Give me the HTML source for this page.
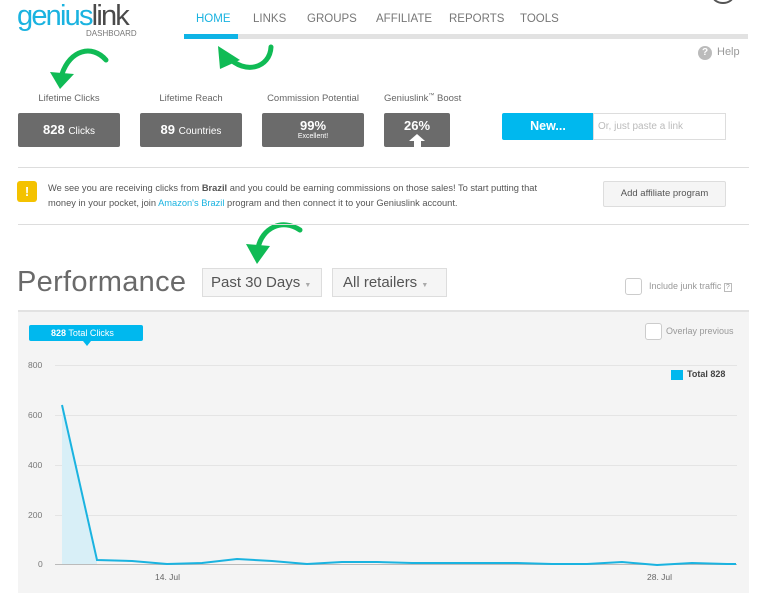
<!DOCTYPE html>
<html><head><meta charset="utf-8"><style>
*{margin:0;padding:0;box-sizing:border-box}
body{width:768px;height:602px;background:#fff;font-family:"Liberation Sans",sans-serif;position:relative;overflow:hidden;color:#555}
.a{position:absolute}
.nav{font-size:11.5px;color:#777;top:13px}
.lbl{font-size:9.5px;color:#666;top:93px;text-align:center}
.box{background:#6b6b6b;color:#fff;top:113px;height:34px;border-radius:2px;text-align:center;font-weight:bold;font-size:13px}
.box small{font-weight:normal;font-size:10px}
.yl{font-size:8.5px;color:#777;left:28px}
.grid{left:55px;width:682px;height:1px;background:#e4e4e4}
</style></head><body>
<div class="a" style="left:17px;top:0px;font-size:29px;letter-spacing:-1.8px;"><span style="color:#1ab3e0">genius</span><span style="color:#4a4a4a">link</span></div>
<div class="a" style="left:86px;top:29px;font-size:8px;color:#777">DASHBOARD</div>
<div class="a" style="left:712px;top:-12px;width:22px;height:16px;border:2px solid #555;border-radius:50%"></div>
<div class="a nav" style="left:196px;color:#1ab3e0">HOME</div>
<div class="a nav" style="left:253px">LINKS</div>
<div class="a nav" style="left:307px">GROUPS</div>
<div class="a nav" style="left:376px">AFFILIATE</div>
<div class="a nav" style="left:449px">REPORTS</div>
<div class="a nav" style="left:520px">TOOLS</div>
<div class="a" style="left:184px;top:34px;width:564px;height:5px;background:#e2e2e2"></div>
<div class="a" style="left:184px;top:34px;width:54px;height:5px;background:#0fb4e6"></div>
<div class="a" style="left:698px;top:46px;width:14px;height:14px;border-radius:50%;background:#bbb;color:#fff;font-size:10px;font-weight:bold;text-align:center;line-height:14px">?</div>
<div class="a" style="left:717px;top:46px;font-size:11px;color:#999">Help</div>
<svg class="a" style="left:0;top:0" width="768" height="602">
<g fill="none" stroke="#10bb55" stroke-width="5" stroke-linecap="round">
<path d="M106 60 C92 44 70 50 62 74"/>
<path d="M271 47 C270 68 245 75 228 57"/>
<path d="M300 230 C282 218 262 228 258 248"/>
</g>
<g fill="#10bb55">
<polygon points="50,72 74,74 60,89"/>
<polygon points="218,46 240,60 220,69"/>
<polygon points="246,244 270,246 257,264"/>
</g>
</svg>
<div class="a lbl" style="left:18px;width:102px">Lifetime Clicks</div>
<div class="a lbl" style="left:140px;width:102px">Lifetime Reach</div>
<div class="a lbl" style="left:258px;width:110px">Commission Potential</div>
<div class="a lbl" style="left:384px;width:80px;text-align:left">Geniuslink<sup style="font-size:6px">™</sup> Boost</div>
<div class="a box" style="left:18px;width:102px;line-height:34px">828 <small>Clicks</small></div>
<div class="a box" style="left:140px;width:102px;line-height:34px">89 <small>Countries</small></div>
<div class="a box" style="left:262px;width:102px;padding-top:5px">99%<div style="font-size:7px;font-weight:normal;line-height:8px">Excellent!</div></div>
<div class="a box" style="left:384px;width:66px;padding-top:5px">26%
<div style="margin:1px auto 0;width:0;height:0;border-left:8px solid transparent;border-right:8px solid transparent;border-bottom:7px solid #fff"></div><div style="margin:0 auto;width:7px;height:6px;background:#fff"></div></div>
<div class="a" style="left:502px;top:113px;width:92px;height:27px;background:#00b8ee;color:#fff;font-size:12.5px;font-weight:bold;line-height:27px;text-align:center;border-radius:2px 0 0 2px">New...</div>
<div class="a" style="left:593px;top:113px;width:133px;height:27px;border:1px solid #ddd;font-size:10px;color:#bbb;line-height:25px;padding-left:4px">Or, just paste a link</div>
<div class="a" style="left:18px;top:167px;width:731px;height:1px;background:#ddd"></div>
<div class="a" style="left:18px;top:224px;width:731px;height:1px;background:#ddd"></div>
<div class="a" style="left:17px;top:181px;width:20px;height:21px;background:#f4c200;border-radius:3px;color:#fff;font-weight:bold;font-size:13px;text-align:center;line-height:21px">!</div>
<div class="a" style="left:48px;top:181px;font-size:9.3px;color:#555;line-height:15px">We see you are receiving clicks from <b>Brazil</b> and you could be earning commissions on those sales! To start putting that<br>money in your pocket, join <span style="color:#1ab3e0">Amazon's Brazil</span> program and then connect it to your Geniuslink account.</div>
<div class="a" style="left:603px;top:181px;width:123px;height:26px;border:1px solid #ddd;background:#f5f5f5;font-size:9.5px;color:#555;text-align:center;line-height:24px;border-radius:2px">Add affiliate program</div>
<div class="a" style="left:17px;top:266px;font-size:29px;color:#6a6a6a;letter-spacing:0.3px">Performance</div>
<div class="a" style="left:202px;top:268px;width:120px;height:29px;border:1px solid #ddd;background:#f5f5f5;font-size:15px;color:#555;line-height:27px;padding-left:8px">Past 30 Days <span style="font-size:7px;color:#aaa">▼</span></div>
<div class="a" style="left:332px;top:268px;width:115px;height:29px;border:1px solid #ddd;background:#f5f5f5;font-size:15px;color:#555;line-height:27px;padding-left:10px">All retailers <span style="font-size:7px;color:#aaa">▼</span></div>
<div class="a" style="left:625px;top:278px;width:17px;height:17px;border:1px solid #ccc;border-radius:3px"></div>
<div class="a" style="left:649px;top:281px;font-size:9px;color:#999">Include junk traffic <span style="border:1px solid #bbb;font-size:7px;padding:0 1px">?</span></div>
<div class="a" style="left:18px;top:310px;width:731px;height:283px;background:#f4f4f4;border-top:2px solid #e2e2e2"></div>
<div class="a" style="left:29px;top:325px;width:114px;height:16px;background:#00b8ee;border-radius:2px;color:#fff;font-size:9px;line-height:16px;padding-left:22px"><b>828</b> Total Clicks</div>
<div class="a" style="left:83px;top:341px;border-left:4px solid transparent;border-right:4px solid transparent;border-top:5px solid #00b8ee"></div>
<div class="a" style="left:645px;top:323px;width:17px;height:17px;border:1px solid #ccc;border-radius:3px;background:#fff"></div>
<div class="a" style="left:666px;top:326px;font-size:9px;color:#999">Overlay previous</div>
<div class="a" style="left:671px;top:370px;width:12px;height:10px;background:#00b8ee"></div>
<div class="a" style="left:687px;top:369px;font-size:9px;color:#444;font-weight:bold">Total 828</div>
<div class="a grid" style="top:365px"></div><div class="a grid" style="top:415px"></div><div class="a grid" style="top:465px"></div><div class="a grid" style="top:515px"></div>
<div class="a" style="left:55px;top:564px;width:682px;height:1px;background:#bbb"></div>
<div class="a yl" style="top:360px">800</div><div class="a yl" style="top:410px">600</div><div class="a yl" style="top:460px">400</div><div class="a yl" style="top:510px">200</div><div class="a yl" style="top:559px;left:38px">0</div>
<div class="a" style="left:155px;top:572px;font-size:8.5px;color:#666">14. Jul</div>
<div class="a" style="left:647px;top:572px;font-size:8.5px;color:#666">28. Jul</div>
<svg class="a" style="left:0;top:0" width="768" height="602">
<polygon fill="#d8eff7" points="62,405 97,560 97,564 62,564"/>
<polyline fill="none" stroke="#1ab3e0" stroke-width="2" points="62,405 97,560 132,561 167,564 202,563 237,559 272,561 307,564 342,562 377,562 412,563 447,563 482,563 517,563 552,564 587,564 622,562 657,565 692,563 727,564 736,564"/>
</svg>
</body></html>
